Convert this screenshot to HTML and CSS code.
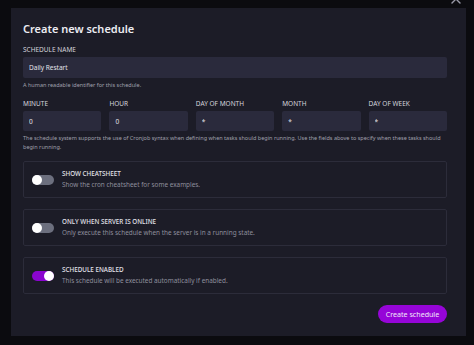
FILE: index.html
```html
<!DOCTYPE html>
<html lang="en">
<head>
  <meta charset="UTF-8" />
  <title>Create new schedule</title>
  <link rel="stylesheet" href="styles.css">
</head>
<body>
  <div class="modal">
    <button class="close" aria-label="Close">
      <svg viewBox="0 0 10 10" width="10" height="10"><path d="M1 1 L9 9 M9 1 L1 9" stroke="#9a9aa8" stroke-width="1.4" stroke-linecap="round"/></svg>
    </button>

    <h1>Create new schedule</h1>

    <div class="field">
      <label>Schedule Name</label>
      <input type="text" value="Daily Restart">
      <p class="hint">A human readable identifier for this schedule.</p>
    </div>

    <div class="cron">
      <div class="field">
        <label>Minute</label>
        <input type="text" value="0">
      </div>
      <div class="field">
        <label>Hour</label>
        <input type="text" value="0">
      </div>
      <div class="field">
        <label>Day of month</label>
        <input type="text" value="*">
      </div>
      <div class="field">
        <label>Month</label>
        <input type="text" value="*">
      </div>
      <div class="field">
        <label>Day of week</label>
        <input type="text" value="*">
      </div>
    </div>
    <p class="hint cron-hint">The schedule system supports the use of Cronjob syntax when defining when tasks should begin running. Use the fields above to specify when these tasks should begin running.</p>

    <div class="option">
      <span class="toggle"></span>
      <div>
        <h3>Show Cheatsheet</h3>
        <p>Show the cron cheatsheet for some examples.</p>
      </div>
    </div>

    <div class="option">
      <span class="toggle"></span>
      <div>
        <h3>Only when server is online</h3>
        <p>Only execute this schedule when the server is in a running state.</p>
      </div>
    </div>

    <div class="option">
      <span class="toggle on"></span>
      <div>
        <h3>Schedule enabled</h3>
        <p>This schedule will be executed automatically if enabled.</p>
      </div>
    </div>

    <div class="actions">
      <button class="primary">Create schedule</button>
    </div>
  </div>
</body>
</html>
```

FILE: styles.css
```css
* {
  box-sizing: border-box;
}

html, body {
  margin: 0;
  padding: 0;
  height: 100vh;
  overflow: hidden;
  background: #0b0b0f;
  font-family: 'Noto Sans', 'Open Sans', sans-serif;
  color: #e6e6ee;
}

.modal {
  position: relative;
  margin: 8px 0 0 11px;
  width: 455px;
  height: 328px;
  background: #1c1c27;
  padding: 14px 19px 0 12px;
}

.close {
  position: absolute;
  top: -14px;
  right: 5px;
  padding: 0;
  border: none;
  background: none;
  line-height: 0;
}

h1 {
  margin: 0 0 9px;
  font-size: 11px;
  font-weight: 600;
  line-height: 14px;
  color: #ececf2;
}

label {
  display: block;
  font-size: 6.5px;
  text-transform: uppercase;
  color: #d4d4dc;
  line-height: 9px;
  margin-bottom: 3px;
}

input[type="text"] {
  display: block;
  width: 100%;
  border: none;
  border-radius: 2px;
  background: #2a2a3c;
  color: #e2e2ea;
  font-family: inherit;
  font-size: 6.5px;
  padding: 0 6px;
  height: 21px;
  outline: none;
}

.hint {
  margin: 3px 0 0;
  font-size: 5.5px;
  line-height: 9px;
  color: #a0a0ac;
}

.cron {
  display: grid;
  grid-template-columns: repeat(5, 1fr);
  gap: 8px;
  margin-top: 9px;
}

.cron input[type="text"] {
  height: 20px;
}

.cron-hint {
  margin-top: 3px;
  margin-bottom: 9px;
}

.option {
  display: flex;
  align-items: center;
  gap: 8px;
  height: 37px;
  border: 1px solid #2c2c3a;
  border-radius: 2px;
  padding: 0 8px;
  margin-bottom: 11px;
}

.option h3 {
  margin: 0;
  font-size: 6.3px;
  font-weight: 500;
  text-transform: uppercase;
  line-height: 9px;
  color: #e2e2ea;
}

.option p {
  margin: 2px 0 0;
  font-size: 6.4px;
  line-height: 10px;
  color: #8e8e9c;
}

.toggle {
  position: relative;
  flex: none;
  width: 22px;
  height: 10px;
  border-radius: 5px;
  background: #6c6f7e;
}

.toggle::after {
  content: '';
  position: absolute;
  top: 0;
  left: 0;
  width: 10px;
  height: 10px;
  border-radius: 50%;
  background: #ffffff;
}

.toggle.on {
  background: #8a05cf;
}

.toggle.on::after {
  left: 12px;
}

.actions {
  display: flex;
  justify-content: flex-end;
  margin-top: 1px;
}

.primary {
  border: none;
  border-radius: 9px;
  background: #9605d8;
  color: #f2e8fa;
  font-family: inherit;
  font-size: 7.1px;
  height: 18px;
  width: 69px;
  padding: 0;
}
```
